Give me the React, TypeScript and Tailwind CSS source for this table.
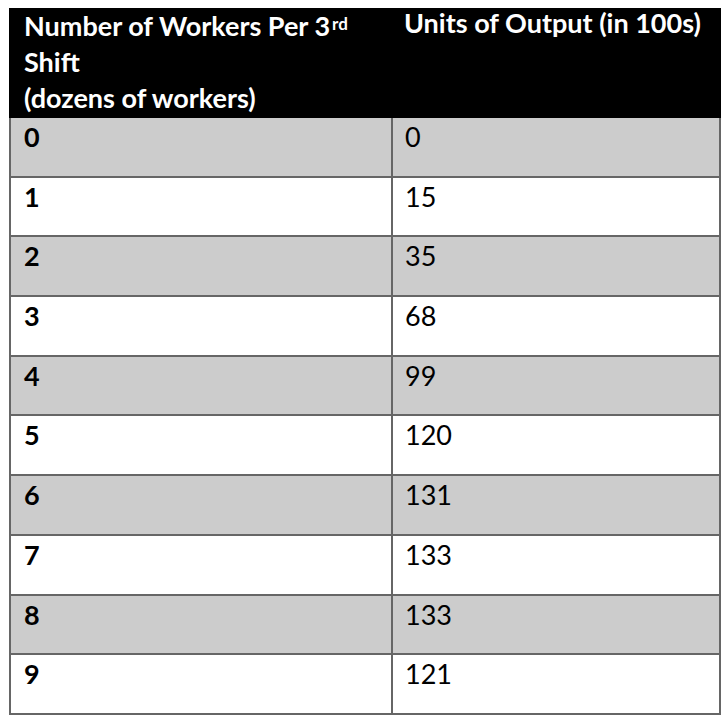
import React from "react";

const rows = [
  { workers: "0", output: "0" },
  { workers: "1", output: "15" },
  { workers: "2", output: "35" },
  { workers: "3", output: "68" },
  { workers: "4", output: "99" },
  { workers: "5", output: "120" },
  { workers: "6", output: "131" },
  { workers: "7", output: "133" },
  { workers: "8", output: "133" },
  { workers: "9", output: "121" },
];

const App = () => {
  return (
    <div className="min-h-screen bg-white pt-[8px] pl-[9px] font-['Lato',_'Open_Sans',_sans-serif] text-[27px] text-black">
      <div className="w-[712px]">
        <div className="flex h-[110px] bg-black font-bold text-white">
          <div className="w-[384px] pl-[15px] leading-[36px]">
            Number of Workers Per 3
            <sup className="relative top-[7px] ml-[2px] align-top text-[17px] leading-none">rd</sup>
            <br />
            Shift
            <br />
            (dozens of workers)
          </div>
          <div className="flex-1 pl-[11px] leading-[29px]">Units of Output (in 100s)</div>
        </div>
        <div className="border-x-2 border-[#666666]">
          {rows.map((row, i) => (
            <div
              key={row.workers}
              className={`flex h-[59.7px] border-b-2 border-[#666666] leading-[32px] ${
                i % 2 === 0 ? "bg-[#cccccc]" : "bg-white"
              }`}
            >
              <div className="w-[382px] border-r-2 border-[#666666] pl-[13px] pt-[3px] font-bold">
                {row.workers}
              </div>
              <div className="flex-1 pl-[12px] pt-[3px]">{row.output}</div>
            </div>
          ))}
        </div>
      </div>
    </div>
  );
};

export default App;
